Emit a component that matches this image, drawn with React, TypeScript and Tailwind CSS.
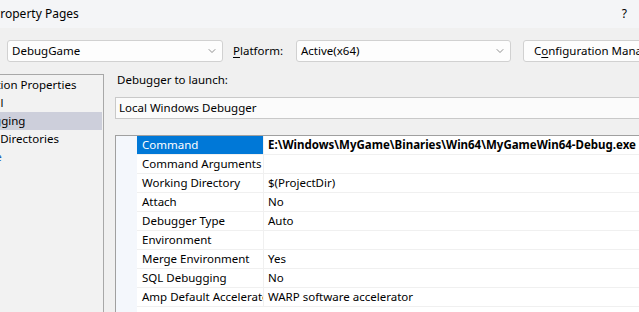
import { ChevronDown } from "lucide-react";

const font = { fontFamily: '"Noto Sans", "Open Sans", sans-serif' };

const rows: { name: string; value: string; bold?: boolean }[] = [
  { name: "Command", value: "E:\\Windows\\MyGame\\Binaries\\Win64\\MyGameWin64-Debug.exe", bold: true },
  { name: "Command Arguments", value: "" },
  { name: "Working Directory", value: "$(ProjectDir)" },
  { name: "Attach", value: "No" },
  { name: "Debugger Type", value: "Auto" },
  { name: "Environment", value: "" },
  { name: "Merge Environment", value: "Yes" },
  { name: "SQL Debugging", value: "No" },
  { name: "Amp Default Accelerator", value: "WARP software accelerator" },
];

function Combo({ text, width }: { text: string; width: string }) {
  return (
    <div
      className={`${width} shrink-0 h-[22px] flex items-center justify-between bg-[#fdfdfd] border border-[#d1d1d1] rounded-[3px] pl-[4px] pr-[4px]`}
    >
      <span>{text}</span>
      <ChevronDown className="w-[12px] h-[12px] text-[#6b6b6b]" strokeWidth={1.5} />
    </div>
  );
}

export default function App() {
  return (
    <div
      className="w-[639px] h-[312px] overflow-hidden bg-[#f0f0f0] text-[11.5px] text-black flex flex-col"
      style={font}
    >
      {/* title bar */}
      <div className="h-[28px] shrink-0 flex items-center justify-between bg-[#f4f5f7] pr-[12px]">
        <span className="ml-[-7px] text-[12px]">Property Pages</span>
        <span className="text-[12px]">?</span>
      </div>

      {/* config row */}
      <div className="mt-[12px] flex items-center pl-[7px] h-[22px] shrink-0">
        <Combo text="DebugGame" width="w-[216px]" />
        <span className="ml-[10px] w-[63px] shrink-0">
          <span className="underline underline-offset-2">P</span>latform:
        </span>
        <Combo text="Active(x64)" width="w-[215px]" />
        <div className="ml-[12px] shrink-0 h-[22px] flex items-center bg-[#fdfdfd] border border-[#d1d1d1] rounded-[3px] pl-[10px] pr-[10px] whitespace-nowrap">
          C<span className="underline underline-offset-2">o</span>nfiguration Manager...
        </div>
      </div>

      <div className="mt-[12px] flex flex-1 min-h-0">
        {/* tree */}
        <div className="w-[104px] shrink-0 border-t border-r border-[#a8a8a8] bg-[#f2f2f2] pt-[1px] overflow-hidden">
          <div className="h-[18px] flex items-center whitespace-nowrap">
            <span className="ml-[-57px]">Configuration Properties</span>
          </div>
          <div className="h-[18px] flex items-center whitespace-nowrap">
            <span className="ml-[-39px]">General</span>
          </div>
          <div className="h-[18px] flex items-center whitespace-nowrap bg-[#cdcfdb] mr-[1px]">
            <span className="ml-[-35px]">Debugging</span>
          </div>
          <div className="h-[18px] flex items-center whitespace-nowrap">
            <span className="ml-[-30px]">VC++ Directories</span>
          </div>
          <div className="h-[18px] flex items-center whitespace-nowrap">
            <span className="ml-[-61px] text-[#1a5fb4]">C/C++ Code</span>
          </div>
        </div>

        {/* right side */}
        <div className="flex-1 min-w-0 pl-[11px] flex flex-col">
          <div className="h-[22px] flex items-center pl-[2px] mt-[-5px]">Debugger to launch:</div>
          <div className="mt-[6px] h-[22px] shrink-0 flex items-center bg-[#fbfbfb] border border-[#c9c9c9] border-r-0 pl-[3px]">
            Local Windows Debugger
          </div>

          <div className="mt-[16px] flex-1 flex border-t border-l border-[#a0a0a0] bg-white">
            <div className="w-[21px] shrink-0 bg-[#f4f7fc]" />
            <div className="flex-1 min-w-0">
              {rows.map((r, i) => (
                <div key={r.name} className="h-[19px] flex border-b border-[#f0f0f0]">
                  <div
                    className={`w-[127px] shrink-0 pl-[5px] flex items-center whitespace-nowrap overflow-hidden border-r border-[#f0f0f0] ${
                      i === 0 ? "bg-[#0078d7] text-white" : ""
                    }`}
                  >
                    {r.name}
                  </div>
                  <div
                    className={`flex-1 pl-[4px] flex items-center whitespace-nowrap ${
                      r.bold ? "font-bold" : ""
                    }`}
                  >
                    {r.value}
                  </div>
                </div>
              ))}
            </div>
          </div>
        </div>
      </div>
    </div>
  );
}
